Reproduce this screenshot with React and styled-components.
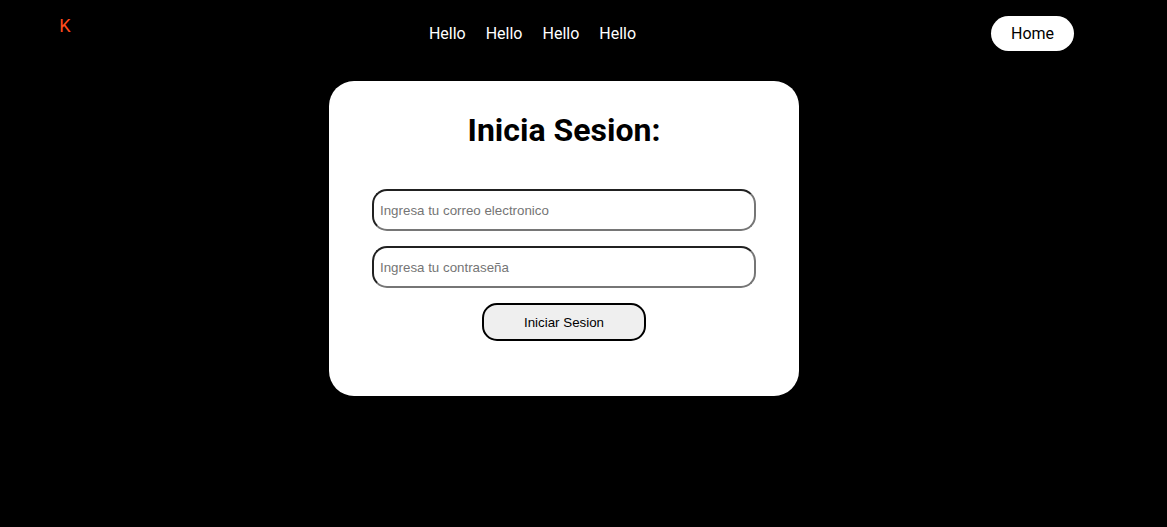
import React from 'react';
import styled, { createGlobalStyle } from 'styled-components';

const GlobalStyle = createGlobalStyle`
  html, body {
    margin: 0;
    padding: 0;
    background: #000;
    font-family: Roboto, "Liberation Sans", sans-serif;
  }
`;

const Page = styled.div`
  min-height: 527px;
  background: #000;
`;

const Nav = styled.nav`
  display: flex;
  justify-content: space-between;
  align-items: center;
  height: 66px;
  padding: 0 93px 0 57px;
  box-sizing: border-box;
`;

const Logo = styled.a`
  align-self: flex-start;
  width: 16px;
  margin-top: 16px;
  text-align: center;
  font-size: 18px;
  line-height: 20px;
  font-weight: 400;
  color: #ff4a1c;
`;

const NavLinks = styled.ul`
  display: flex;
  gap: 20px;
  margin: 0 0 0 1px;
  padding: 0;
  list-style: none;
`;

const NavLink = styled.li`
  color: #fff;
  font-size: 16px;
  font-weight: 400;
  line-height: 19px;
`;

const HomeButton = styled.button`
  width: 83px;
  height: 35px;
  padding: 0;
  border: none;
  border-radius: 18px;
  background: #fff;
  color: #000;
  font-family: Roboto, sans-serif;
  font-size: 16px;
`;

const Main = styled.main`
  display: flex;
  justify-content: center;
  padding: 15px 39px 0 0;
`;

const Card = styled.form`
  display: flex;
  flex-direction: column;
  align-items: center;
  width: 470px;
  height: 315px;
  padding-top: 30px;
  box-sizing: border-box;
  border-radius: 25px;
  background: #fff;
`;

const Title = styled.h1`
  margin: 0 0 40px;
  font-size: 32px;
  line-height: 38px;
  font-weight: 700;
  color: #000;
`;

const Input = styled.input`
  width: 384px;
  height: 42px;
  margin-bottom: 15px;
  padding: 0 6px;
  box-sizing: border-box;
  border: 2px inset #767676;
  border-radius: 15px;
  background: #fff;
  font-family: "Liberation Sans", Arial, sans-serif;
  font-size: 13.33px;
  outline: none;

  &::placeholder {
    color: #757575;
  }
`;

const Submit = styled.button`
  width: 164px;
  height: 38px;
  padding: 0;
  border: 2px solid #000;
  border-radius: 15px;
  background: #efefef;
  color: #000;
  font-family: "Liberation Sans", Arial, sans-serif;
  font-size: 13.33px;
`;

const App = () => {
  const links = ['Hello', 'Hello', 'Hello', 'Hello'];

  return (
    <Page>
      <GlobalStyle />
      <Nav>
        <Logo>K</Logo>
        <NavLinks>
          {links.map((link, index) => (
            <NavLink key={index}>{link}</NavLink>
          ))}
        </NavLinks>
        <HomeButton type="button">Home</HomeButton>
      </Nav>
      <Main>
        <Card>
          <Title>Inicia Sesion:</Title>
          <Input type="email" placeholder="Ingresa tu correo electronico" />
          <Input type="password" placeholder="Ingresa tu contraseña" />
          <Submit type="button">Iniciar Sesion</Submit>
        </Card>
      </Main>
    </Page>
  );
};

export default App;
